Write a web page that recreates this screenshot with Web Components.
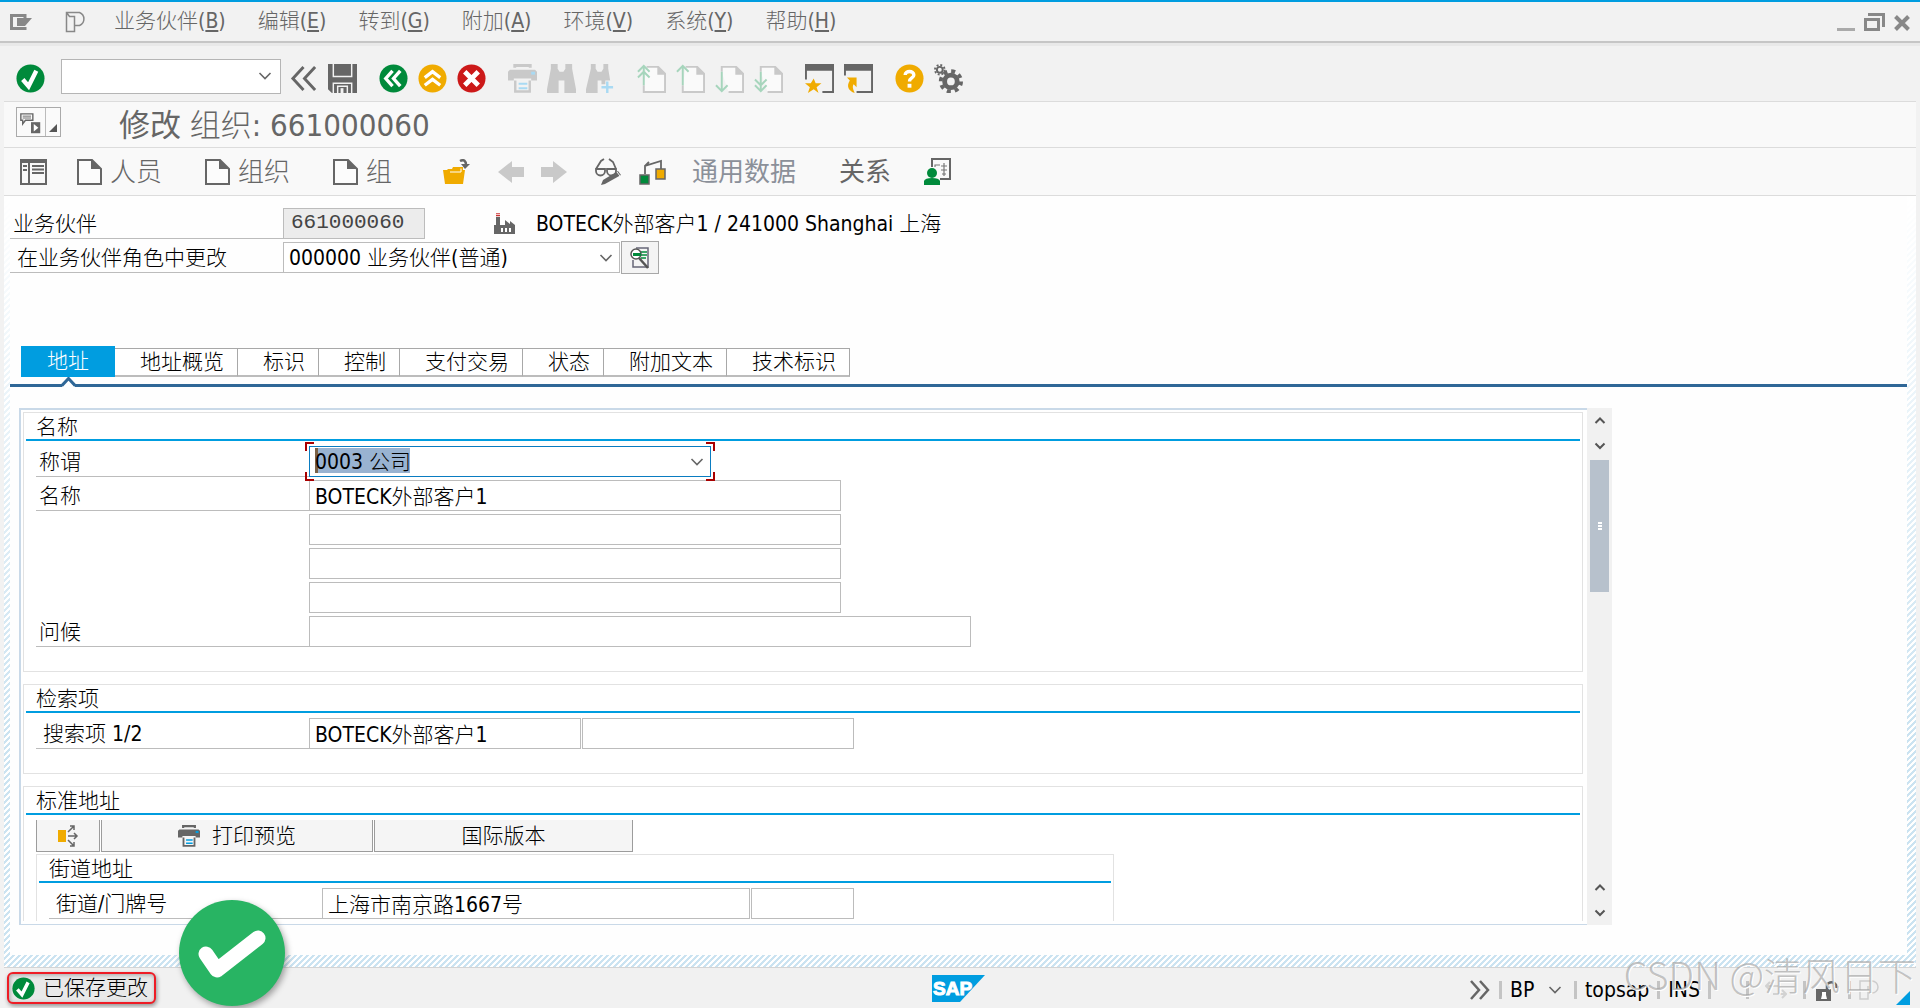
<!DOCTYPE html>
<html lang="zh-CN">
<head>
<meta charset="UTF-8">
<meta name="viewport" content="width=device-width, initial-scale=1.0">
<title>修改 组织: 661000060</title>
<style>
  html, body { margin: 0; height: 100%; }
  body {
    --blue: #009de0;
    --line: #bcbcbc;
    --gray: #666;
    font-family: 'DejaVu Sans Condensed', 'Noto Sans CJK SC', sans-serif;
    font-size: 21px;
    line-height: 30px;
    color: #000;
    background: #f2f2f2;
    overflow: hidden;
  }
</style>
</head>
<body>
<sap-window></sap-window>

<script>
const ICONS = {
  exit: ['0 0 22 16', '<path d="M15 4V1.500H1.500v13H15V13" fill="none" stroke="#888" stroke-width="3"/><path d="M7 4h15l-7 8H7z" fill="#888"/>'],
  pmark: ['0 0 24 22', '<path d="M1.500 20.500v-19h13a7 7 0 0 1 0 13H9.500v6zM9.500 14.500v-9h-5l-3-4" fill="none" stroke="#888" stroke-width="1.500"/>'],
  ok: ['0 0 30 30', '<circle cx="15" cy="15" r="14.500" fill="#008a3b"/><path d="M7 16l6 7L21 7" fill="none" stroke="#fff" stroke-width="4.500"/>'],
  dbl: ['0 0 30 30', '<path d="M15 3L4 15l11 12M27 3L16 15l11 12" fill="none" stroke="#666" stroke-width="3"/>'],
  fwd: ['0 0 22 22', '<path d="M2 2l8 9-8 9M11 2l8 9-8 9" fill="none" stroke="#666" stroke-width="2.500"/>'],
  save: ['0 0 30 30', '<path d="M0 0h30v30H4l-4-4z" fill="#666"/><path d="M5.500 0v13h19V0M5.500 30V20h19v10" fill="none" stroke="#f2f2f2" stroke-width="1.500"/><path d="M10 30v-7h10v7" fill="none" stroke="#f2f2f2" stroke-width="1.500"/><path d="M13 25h3v5h-3z" fill="#f2f2f2"/>'],
  back: ['0 0 30 30', '<circle cx="15" cy="15" r="14.500" fill="#008a3b"/><path d="M14 7l-7 8 7 8M22 7l-7 8 7 8" fill="none" stroke="#fff" stroke-width="3.500"/>'],
  up: ['0 0 30 30', '<circle cx="15" cy="15" r="14.500" fill="#f0ab00"/><path d="M7 14l8-6 8 6M7 22l8-6 8 6" fill="none" stroke="#fff" stroke-width="3.500"/>'],
  cancel: ['0 0 30 30', '<circle cx="15" cy="15" r="14.500" fill="#cc1919"/><path d="M8 8l14 14M22 8L8 22" stroke="#fff" stroke-width="5"/>'],
  print: ['0 0 30 30', '<path d="M7 4V1.500h16V4" fill="none" stroke="currentColor" stroke-width="3"/><path d="M2 6h26l2 2v9H24v-2H6v2H0V8z" fill="currentColor"/><path d="M24 8h4v3h-4z" fill="var(--accent)"/><path d="M7.500 17v11.500h15V17" fill="none" stroke="currentColor" stroke-width="2.500"/><path d="M11 20.500h9M11 25h9" stroke="var(--accent)" stroke-width="2"/>'],
  find: ['0 0 30 30', '<path d="M4 0h7v5l2 3h4l2-3V0h7v5l4 21v4H18V17h-6v13H0v-4L4 5z" fill="#c9c9c9"/>'],
  findnext: ['0 0 30 30', '<path d="M5 0h5v5l2 3h4l2-3V0h5v5l2 12h-5v4h-4v-4h-4v13H0v-4L5 5z" fill="#c9c9c9"/><path d="M22 18v12M16 24h12" stroke="#a9daf3" stroke-width="2.500"/>'],
  first: ['0 0 30 30', '<path d="M10 3h12l7 7v19H7V22" fill="#fafafa" stroke="#c9c9c9" stroke-width="2"/><path d="M21 2v9h9z" fill="#c9c9c9"/><path d="M7 2v20M1 8l6-6 6 6M1 14l6-6 6 6" fill="none" stroke="#a6d5bc" stroke-width="2"/>'],
  prev: ['0 0 30 30', '<path d="M10 3h12l7 7v19H7V22" fill="#fafafa" stroke="#c9c9c9" stroke-width="2"/><path d="M21 2v9h9z" fill="#c9c9c9"/><path d="M7 2v20M1 8l6-6 6 6" fill="none" stroke="#a6d5bc" stroke-width="2"/>'],
  next: ['0 0 30 30', '<path d="M7 8V3h15l7 7v19H14" fill="#fafafa" stroke="#c9c9c9" stroke-width="2"/><path d="M21 2v9h9z" fill="#c9c9c9"/><path d="M7 8v20M1 22l6 6 6-6" fill="none" stroke="#a6d5bc" stroke-width="2"/>'],
  last: ['0 0 30 30', '<path d="M7 8V3h15l7 7v19H14" fill="#fafafa" stroke="#c9c9c9" stroke-width="2"/><path d="M21 2v9h9z" fill="#c9c9c9"/><path d="M7 8v20M1 16l6 6 6-6M1 22l6 6 6-6" fill="none" stroke="#a6d5bc" stroke-width="2"/>'],
  session: ['0 0 30 30', '<path d="M0 0h30v30H18v-2h10V7H2v9H0z" fill="#666"/><path d="M9 15l2 5h6l-5 4 2 6-5-4-6 4 2-6-5-4h6z" fill="#f0ab00"/>'],
  shortcut: ['0 0 30 30', '<path d="M0 0h30v30H13v-2h15V7H2v5H0z" fill="#666"/><path d="M3 14h10v10l-3-3c-2 3 0 6 1 9-6-2-9-7-5-13z" fill="#f0ab00"/>'],
  help: ['0 0 30 30', '<circle cx="15" cy="15" r="14.500" fill="#f0ab00"/><path d="M10.500 11.500c0-5 9-5 9 0 0 3-4.500 3-4.500 6.500" fill="none" stroke="#fff" stroke-width="3.500"/><path d="M13 20.500h4v4h-4z" fill="#fff"/>'],
  gears: ['0 0 30 30', '<g fill="none" stroke="#666"><circle cx="17.500" cy="18" r="6.500" stroke-width="5"/><circle cx="17.500" cy="18" r="10.500" stroke-width="4" stroke-dasharray="4.120 4.120"/><circle cx="6" cy="6" r="3" stroke-width="2"/><circle cx="6" cy="6" r="5" stroke-width="2" stroke-dasharray="1.960 1.960"/></g>'],
  services: ['0 0 30 26', '<path d="M4 2h13v7H9l-3 4V9H4z" fill="none" stroke="#666" stroke-width="1.500"/><path d="M6 4.500h9M6 6.500h9" stroke="#666"/><path d="M15 11h10v12H15z" fill="#666"/><path d="M18 13l5 4-5 4z" fill="#fff"/>'],
  corner: ['0 0 10 10', '<path d="M9 1v8H1z" fill="#555"/>'],
  list: ['0 0 27 26', '<path d="M1 1h25v24H1zM9 1v24" fill="none" stroke="#666" stroke-width="2"/><path d="M0 0h27v4H0z" fill="#666"/><path d="M3 7h4M3 11h4M12 7h12M12 10.500h12M12 14h12" stroke="#666" stroke-width="1.800"/>'],
  page: ['0 0 25 26', '<path d="M1 1h14l9 9v15H1z" fill="#fcfcfc" stroke="#666" stroke-width="2"/><path d="M14 0v10h10z" fill="#666"/>'],
  open: ['0 0 27 26', '<path d="M2 25L0 11h4l1-1h4l1-2h10v3h2l-2 14z" fill="#f0ab00"/><path d="M7 13h11V9.500" fill="none" stroke="#fff"/><path d="M17 2c4-2 6 0 6 4" fill="none" stroke="#666" stroke-width="2.500"/><path d="M18 5h9l-5 5z" fill="#666"/>'],
  left: ['0 0 26 22', '<path d="M0 11L14 0v6h12v10H14v6z" fill="#c9c9c9"/>'],
  right: ['0 0 26 22', '<path d="M26 11L12 0v6H0v10h12v6z" fill="#c9c9c9"/>'],
  glasses: ['0 0 27 28', '<g fill="none" stroke="#666" stroke-width="1.800"><path d="M1 11h9v2a4 4 0 0 1-9 0zM12 11h9v2a4 4 0 0 1-9 0zM1 11l5-8 3-2M21 11l-3-7-4-3"/></g><path d="M6 27l2-5L23 13l3 4-16 9z" fill="#666"/><path d="M22 14l3 4" stroke="#f9f9f9"/>'],
  tree: ['0 0 27 26', '<path d="M6 15V7L22 2v8M6 7l4-4" fill="none" stroke="#666" stroke-width="1.800"/><path d="M1 16h9v9H1z" fill="#008a3b" stroke="#666" stroke-width="1.500"/><path d="M17 10h9v10h-9z" fill="#f0ab00" stroke="#666" stroke-width="1.500"/>'],
  partner: ['0 0 27 27', '<path d="M8 9V1h18v20H16" fill="none" stroke="#666" stroke-width="2"/><path d="M11 9V7h5M20 5v13M17 8h6M17 12h6M18 16h4" fill="none" stroke="#777" stroke-width="1.200"/><circle cx="8" cy="15" r="5" fill="#008a3b"/><path d="M0 27v-4q1-3 8-3t8 3v4z" fill="#008a3b"/>'],
  factory: ['0 0 22 21', '<path d="M0 21V12h2V4h4v8h5V7l5 4V8l5 4v9z" fill="#666"/><path d="M2 0h4M2 2.500h4" stroke="#c33" stroke-width="1.300"/><path d="M7 15h2v4H7zM11 15h2v4h-2zM15 15h2v4h-2z" fill="#fff"/>'],
  detail: ['0 0 22 22', '<path d="M7 1h12v19H4V13" fill="#f4f4f4" stroke="#667" stroke-width="1.500"/><path d="M11 5h7M11 8h7M12 11h5" stroke="#008a3b" stroke-width="1.500"/><circle cx="7" cy="7" r="5" fill="#fff" stroke="#555" stroke-width="1.500"/><path d="M4 6h8v3H4z" fill="#008a3b"/><path d="M10 11l9 10" stroke="#555" stroke-width="2.500"/>'],
  structure: ['0 0 22 22', '<path d="M1 5h8v12H1z" fill="#f0ab00"/><path d="M11 7l6-6M13 1h4v4M11 11h9M17 8l3 3-3 3M11 15l6 6M13 21h4v-4" fill="none" stroke="#666" stroke-width="1.500"/>'],
  chevron: ['0 0 14 14', '<path d="M1.500 4L7 9.500 12.500 4" fill="none" stroke="#666" stroke-width="1.600"/>'],
  sdown: ['0 0 12 12', '<path d="M1.500 3.500L6 8l4.500-4.500" fill="none" stroke="#555" stroke-width="2"/>'],
  sup: ['0 0 12 12', '<path d="M1.500 8L6 3.500 10.500 8" fill="none" stroke="#555" stroke-width="2"/>'],
  min: ['0 0 18 18', '<path d="M0 15h18v3H0z" fill="#aaa"/>'],
  restore: ['0 0 21 18', '<path d="M1.500 6.500h13v10h-13zM4 1.500h15.500V14" fill="none" stroke="#888" stroke-width="3"/>'],
  close: ['0 0 16 18', '<path d="M1.500 3.500l13 13M14.500 3.500l-13 13" stroke="#888" stroke-width="4"/>'],
  lock: ['0 0 22 22', '<path d="M0 10h15v12H0z" fill="#666"/><path d="M11 10V6a5 5 0 0 1 9 0v3" fill="none" stroke="#666" stroke-width="2.500"/><path d="M6 13h4v3l1 4H5l1-4z" fill="#fff"/>'],
  transfer: ['0 0 22 20', '<path d="M1 6h12M5 2L1 6l4 4M8 14h13M17 10l4 4-4 4" fill="none" stroke="#d2d2d2" stroke-width="2"/>'],
  pgray: ['0 0 22 20', '<path d="M1 19V1h12a6 6 0 0 1 0 12H9v6zM9 13V6" fill="none" stroke="#cdcdcd" stroke-width="1.500"/>'],
  grip: ['0 0 14 14', '<path d="M14 0v14H0z" fill="#009de0"/>'],
  done: ['0 0 106 106', '<circle cx="53" cy="53" r="53" fill="#28b463"/><path d="M27 54L38 70 79 38" fill="none" stroke="#fff" stroke-width="15" stroke-linecap="round" stroke-linejoin="round"/>'],
  logo: ['0 0 53 27', '<path d="M0 0h53L28 27H0z" fill="#009de0"/><text x="1" y="20" font-family="Liberation Sans, sans-serif" font-weight="700" font-size="19" fill="#fff" stroke="#fff">SAP</text>']
};

class SapIcon extends HTMLElement {
  connectedCallback() {
    const [box, shapes] = ICONS[this.getAttribute('name')];
    const [, , w, h] = box.split(' ');
    const width = this.getAttribute('width') || w;
    this.attachShadow({ mode: 'open' });
    this.shadowRoot.innerHTML = `
      <style>
        :host { display: inline-flex; flex: none; }
        svg { display: block; width: ${width}px; height: ${Math.round(width * h / w)}px; }
      </style>
      <svg viewBox="${box}" aria-hidden="true">${shapes}</svg>
    `;
  }
}

class SapMenubar extends HTMLElement {
  connectedCallback() {
    const menus = ['业务伙伴 B', '编辑 E', '转到 G', '附加 A', '环境 V', '系统 Y', '帮助 H'];
    this.attachShadow({ mode: 'open' });
    this.shadowRoot.innerHTML = `
      <style>
        :host {
          display: flex;
          align-items: center;
          height: 39px;
          padding: 0 10px;
          border-top: 2px solid var(--blue);
          border-bottom: 2px solid #c6c6c6;
          box-shadow: 0 3px 0 #e9e9e9;
          color: var(--gray);
          font-weight: 300;
        }
        button { font: inherit; color: inherit; background: none; border: 0; padding: 0; display: flex; }
        nav { display: flex; gap: 32px; margin-left: 25px; padding-bottom: 2px; flex: 1; }
        .mark { margin-left: 33px; }
        .controls { display: flex; gap: 9px; }
      </style>
      <button aria-label="菜单"><sap-icon name="exit"></sap-icon></button>
      <sap-icon class="mark" name="pmark"></sap-icon>
      <nav>
        ${menus.map(m => {
          const [text, key] = m.split(' ');
          return `<button><span>${text}(<u>${key}</u>)</span></button>`;
        }).join('')}
      </nav>
      <div class="controls">
        <button aria-label="最小化"><sap-icon name="min"></sap-icon></button>
        <button aria-label="还原"><sap-icon name="restore"></sap-icon></button>
        <button aria-label="关闭"><sap-icon name="close"></sap-icon></button>
      </div>
    `;
  }
}

class SapToolbar extends HTMLElement {
  connectedCallback() {
    const groups = [
      ['dbl', 'save'],
      ['back', 'up', 'cancel'],
      ['print', 'find', 'findnext'],
      ['first', 'prev', 'next', 'last'],
      ['session', 'shortcut'],
      ['help', 'gears']
    ];
    this.attachShadow({ mode: 'open' });
    this.shadowRoot.innerHTML = `
      <style>
        :host { display: flex; align-items: center; height: 46px; padding: 12px 16px 0; color: #c9c9c9; --accent: #a9daf3; }
        button { color: inherit; background: none; border: 0; padding: 0; display: flex; }
        .groups { display: flex; gap: 22px; margin-left: 8px; }
        .group { display: flex; gap: 10px; }
        .command { position: relative; margin-left: 16px; padding-bottom: 3px; }
        input { box-sizing: border-box; display: block; width: 220px; height: 35px; border: 1px solid #b5b5b5; background: #fff; font: inherit; }
        .command sap-icon { position: absolute; right: 9px; top: 10px; color: var(--gray); }
      </style>
      <button aria-label="ok"><sap-icon name="ok" width="29"></sap-icon></button>
      <div class="command"><input type="text" aria-label="命令"><sap-icon name="chevron"></sap-icon></div>
      <div class="groups">
        ${groups.map(g => `<div class="group">${g.map(n =>
          `<button aria-label="${n}"><sap-icon name="${n}" width="29"></sap-icon></button>`).join('')}</div>`).join('')}
      </div>
    `;
  }
}

class SapTitle extends HTMLElement {
  connectedCallback() {
    this.attachShadow({ mode: 'open' });
    this.shadowRoot.innerHTML = `
      <style>
        :host {
          display: flex;
          align-items: center;
          gap: 58px;
          height: 45px;
          margin: 0 4px;
          padding: 0 12px;
          border-top: 1px solid #dcdcdc;
          border-bottom: 1px solid #dcdcdc;
          background: #f9f9f9;
          color: var(--gray);
        }
        button {
          display: flex;
          align-items: flex-end;
          align-self: flex-start;
          width: 45px;
          height: 30px;
          box-sizing: border-box;
          margin: 5px 0 0;
          padding: 0;
          border: 1px solid #aaa;
          background: #fafafa;
        }
        button sap-icon + sap-icon { border-left: 1px solid #bbb; padding: 15px 2px 3px; }
        h1 { margin: 0; font-size: 31px; line-height: 44px; font-weight: 300; }
        b { font-weight: 400; }
      </style>
      <button aria-label="服务"><sap-icon name="services" width="28"></sap-icon><sap-icon name="corner"></sap-icon></button>
      <h1><b>修改</b> <slot></slot></h1>
    `;
  }
}

class SapAppbar extends HTMLElement {
  connectedCallback() {
    this.attachShadow({ mode: 'open' });
    this.shadowRoot.innerHTML = `
      <style>
        :host {
          display: flex;
          align-items: center;
          height: 47px;
          margin: 0 4px;
          padding: 0 16px;
          border-bottom: 1px solid #dcdcdc;
          background: #f9f9f9;
          color: var(--gray);
          font-size: 26px;
          font-weight: 300;
        }
        button { font: inherit; color: inherit; background: none; border: 0; padding: 0; display: flex; align-items: center; gap: 8px; }
        .create { display: flex; gap: 43px; margin: 0 51px 0 30px; }
        .tools { display: flex; align-items: center; gap: 17px; }
        .nav { display: flex; gap: 17px; margin: 0 11px; }
        .links { display: flex; gap: 43px; margin: 0 33px 0 26px; font-weight: 400; }
        [disabled] { color: #8b9099; }
      </style>
      <button aria-label="定位器"><sap-icon name="list"></sap-icon></button>
      <div class="create">
        <button><sap-icon name="page"></sap-icon>人员</button>
        <button><sap-icon name="page"></sap-icon>组织</button>
        <button><sap-icon name="page"></sap-icon>组</button>
      </div>
      <div class="tools">
        <button aria-label="打开"><sap-icon name="open"></sap-icon></button>
        <div class="nav">
          <button aria-label="上一个"><sap-icon name="left"></sap-icon></button>
          <button aria-label="下一个"><sap-icon name="right"></sap-icon></button>
        </div>
        <button aria-label="显示/更改"><sap-icon name="glasses"></sap-icon></button>
        <button aria-label="层次"><sap-icon name="tree"></sap-icon></button>
      </div>
      <div class="links">
        <button disabled>通用数据</button>
        <button>关系</button>
      </div>
      <button aria-label="伙伴"><sap-icon name="partner"></sap-icon></button>
    `;
  }
}

// One form row: label with underline and one or more boxes.
// values and widths are lists split by "|".
class SapField extends HTMLElement {
  connectedCallback() {
    const label = this.getAttribute('label') || '';
    const values = (this.getAttribute('values') || '').split('|');
    const widths = this.getAttribute('widths').split('|');
    const type = this.getAttribute('type') || 'input';
    this.attachShadow({ mode: 'open' });
    this.shadowRoot.innerHTML = `
      <style>
        :host { display: flex; align-items: flex-start; gap: 1px; font-weight: 300; }
        label, .blank {
          box-sizing: border-box;
          flex: none;
          width: 273px;
          height: 31px;
          margin-right: -1px;
          padding-left: var(--indent, 3px);
          line-height: 32px;
        }
        label { border-bottom: 1px solid var(--line); }
        input, select {
          display: block;
          box-sizing: border-box;
          height: 31px;
          margin: 0;
          padding: 0 5px;
          border: 1px solid var(--line);
          border-radius: 0;
          background: #fff;
          font: inherit;
          color: inherit;
          appearance: none;
          outline: 0;
        }
        input { padding-bottom: 2px; }
        input[readonly] { padding-left: 7px; background: #ececec; font-family: 'Liberation Mono', monospace; color: #444; }
        .combo { position: relative; }
        .combo sap-icon { position: absolute; right: 7px; top: 9px; pointer-events: none; }
        :host([active]) select {
          border-color: #0a7cc1;
          background:
            linear-gradient(#7a6248, #7a6248) 5px 1px / 3px 25px no-repeat,
            linear-gradient(#99b3d1, #99b3d1) 5px 1px / 95px 25px no-repeat, #fff;
        }
        .corners { display: none; }
        :host([active]) .corners {
          --c: linear-gradient(#a80000, #a80000) no-repeat;
          display: block;
          position: absolute;
          inset: -4px;
          pointer-events: none;
          background:
            var(--c), var(--c), var(--c), var(--c), var(--c), var(--c), var(--c), var(--c);
          background-size: 9px 2px, 2px 9px, 9px 2px, 2px 9px, 9px 2px, 2px 9px, 9px 2px, 2px 9px;
          background-position: 0 0, 0 0, 100% 0, 100% 0, 0 100%, 0 100%, 100% 100%, 100% 100%;
          background-repeat: no-repeat;
        }
      </style>
      ${label ? `<label for="f0">${label}</label>` : '<span class="blank"></span>'}
      ${values.map((v, i) => type === 'select'
        ? `<div class="combo"><select id="f${i}" style="width:${widths[i]}px"><option>${v}</option></select>
           <sap-icon name="chevron"></sap-icon><span class="corners"></span></div>`
        : `<input type="text" id="f${i}" value="${v}" style="width:${widths[i]}px"
           ${this.hasAttribute('readonly') ? 'readonly' : ''} ${label && i === 0 ? '' : 'aria-label="续"'}>`).join('')}
      <slot></slot>
    `;
  }
}

class SapGroup extends HTMLElement {
  connectedCallback() {
    this.attachShadow({ mode: 'open' });
    this.shadowRoot.innerHTML = `
      <style>
        :host { display: block; border: 1px solid #e2e2e2; padding-bottom: 24px; background: #fff; }
        h2 {
          margin: 0 2px;
          padding-left: 10px;
          height: 26px;
          line-height: 28px;
          font-size: 21px;
          font-weight: 300;
          border-bottom: 2px solid var(--blue);
        }
        .rows { display: flex; flex-direction: column; gap: 3px; padding: 5px 0 0 12px; }
      </style>
      <h2>${this.getAttribute('heading')}</h2>
      <div class="rows"><slot></slot></div>
    `;
  }
}

class SapTabs extends HTMLElement {
  connectedCallback() {
    const tabs = ['地址', '地址概览', '标识', '控制', '支付交易', '状态', '附加文本', '技术标识'];
    this.attachShadow({ mode: 'open' });
    this.shadowRoot.innerHTML = `
      <style>
        :host { display: block; border-bottom: 3px solid #2f6797; padding: 0 11px 7px; position: relative; }
        .list { display: flex; align-items: flex-end; }
        button {
          box-sizing: border-box;
          height: 29px;
          padding: 0 13px 0 25px;
          border: solid #a8a8a8;
          border-width: 1px 1px 2px 0;
          border-bottom-color: var(--line);
          background: #fff;
          font: inherit;
          font-weight: 300;
          line-height: 26px;
          color: #000;
        }
        button[aria-selected=true] { height: 31px; padding: 0 26px; border: 0; background: var(--blue); color: #fff; line-height: 31px; }
        svg { position: absolute; left: 51px; bottom: -3px; width: 15px; height: 10px; }
      </style>
      <div class="list" role="tablist">
        ${tabs.map((t, i) => `<button role="tab" aria-selected="${i === 0}">${t}</button>`).join('')}
      </div>
      <svg viewBox="0 0 15 10"><path d="M1 10L7.500 2 14 10z" fill="#fff"/><path d="M1 8.500L7.500 1.500 14 8.500" fill="none" stroke="#2f6797" stroke-width="3"/></svg>
    `;
  }
}

class SapScrollbar extends HTMLElement {
  connectedCallback() {
    this.attachShadow({ mode: 'open' });
    this.shadowRoot.innerHTML = `
      <style>
        :host { display: flex; flex-direction: column; flex: none; width: 25px; background: #f1f1f1; }
        button { display: flex; justify-content: center; align-items: center; height: 25px; border: 0; padding: 0; background: none; }
        .track { flex: 1; }
        .thumb {
          display: flex;
          flex-direction: column;
          align-items: center;
          justify-content: center;
          gap: 1px;
          height: 132px;
          margin: 2px 3px 0;
          background: #b7c1cc;
        }
        i { width: 4px; height: 2px; background: #fff; }
      </style>
      <button aria-label="向上"><sap-icon name="sup"></sap-icon></button>
      <button aria-label="向下"><sap-icon name="sdown"></sap-icon></button>
      <div class="track"><div class="thumb"><i></i><i></i><i></i></div></div>
      <button aria-label="向上"><sap-icon name="sup"></sap-icon></button>
      <button aria-label="向下"><sap-icon name="sdown"></sap-icon></button>
    `;
  }
}

class SapAddress extends HTMLElement {
  connectedCallback() {
    this.attachShadow({ mode: 'open' });
    this.shadowRoot.innerHTML = `
      <style>
        :host { display: flex; align-items: stretch; flex: 1; min-height: 0; margin-left: 9px; }
        .panel {
          box-sizing: border-box;
          flex: 0 1 1568px;
          min-width: 0;
          border: solid #c9d9e8;
          border-width: 2px 0 1px 2px;
          padding: 2px 4px 3px 2px;
          background: #fff;
        }
        .clip { height: 100%; overflow: hidden; display: flex; flex-direction: column; gap: 12px; }
        .clip > * { flex: none; }
        .search { --indent: 7px; }
        .street { --indent: 7px; width: 1076px; margin-top: -1px; }
        .buttons { display: flex; gap: 1px; }
        button {
          display: flex;
          align-items: center;
          justify-content: center;
          gap: 12px;
          box-sizing: border-box;
          height: 32px;
          padding: 0;
          border: solid #9c9c9c;
          border-width: 0 1px 1px 1px;
          background: #f5f5f5;
          color: #666;
          --accent: #009de0;
          font: inherit;
          font-weight: 300;
        }
        button span { color: #000; }
      </style>
      <div class="panel"><div class="clip">
        <sap-group heading="名称">
          <sap-field type="select" active label="称谓" values="0003 公司" widths="402"></sap-field>
          <sap-field label="名称" values="BOTECK外部客户1" widths="532"></sap-field>
          <sap-field widths="532"></sap-field>
          <sap-field widths="532"></sap-field>
          <sap-field widths="532"></sap-field>
          <sap-field label="问候" widths="662"></sap-field>
        </sap-group>
        <sap-group heading="检索项" class="search">
          <sap-field label="搜索项 1/2" values="BOTECK外部客户1|" widths="272|272"></sap-field>
        </sap-group>
        <sap-group heading="标准地址">
          <div class="buttons">
            <button style="width:64px" aria-label="结构"><sap-icon name="structure"></sap-icon></button>
            <button style="width:272px"><sap-icon name="print" width="22"></sap-icon><span>打印预览</span></button>
            <button style="width:259px"><span>国际版本</span></button>
          </div>
          <sap-group heading="街道地址" class="street">
            <sap-field label="街道/门牌号" values="上海市南京路1667号|" widths="428|103"></sap-field>
          </sap-group>
        </sap-group>
      </div></div>
      <sap-scrollbar></sap-scrollbar>
    `;
  }
}

class SapStatusbar extends HTMLElement {
  connectedCallback() {
    this.attachShadow({ mode: 'open' });
    this.shadowRoot.innerHTML = `
      <style>
        :host {
          display: grid;
          grid-template-columns: 1fr auto 1fr;
          align-items: center;
          height: 40px;
          padding: 0 10px 0 7px;
          background: #f1f1f1;
        }
        .message {
          justify-self: start;
          display: flex;
          align-items: center;
          gap: 8px;
          box-sizing: border-box;
          height: 32px;
          padding: 0 6px 0 3px;
          border: 2px solid #ee1c25;
          border-radius: 6px;
          background: #e9e9e9;
          box-shadow: 1px 2px 4px rgba(0,0,0,0.4), inset 1px 1px 4px rgba(0,0,0,0.3);
          font-weight: 300;
        }
        .info { justify-self: end; display: flex; align-items: center; gap: 8px; padding-top: 3px; }
        .info i { width: 3px; height: 18px; background: #c4c4c4; }
        select { appearance: none; border: 0; padding: 0; width: 28px; background: none; font: inherit; color: inherit; }
        .system { display: flex; align-items: center; gap: 10px; padding-right: 4px; }
        .lock { margin: 0 2px; }
        .grip { align-self: flex-end; margin-left: 7px; }
        .empty { width: 19px; }
        .off { width: 38px; display: flex; justify-content: center; }
      </style>
      <div class="message" role="status"><sap-icon name="ok" width="23"></sap-icon>已保存更改</div>
      <sap-icon name="logo"></sap-icon>
      <div class="info">
        <sap-icon name="fwd" width="22"></sap-icon><i></i>
        <div class="system"><select aria-label="系统"><option>BP</option></select><sap-icon name="chevron"></sap-icon></div>
        <i></i><span>topsap</span><i></i><span>INS</span><i></i><span class="empty"></span><i></i>
        <span class="off"><sap-icon name="transfer"></sap-icon></span><i></i>
        <sap-icon class="lock" name="lock"></sap-icon><i></i>
        <sap-icon name="pgray"></sap-icon>
        <sap-icon class="grip" name="grip"></sap-icon>
      </div>
    `;
  }
}

class SapWindow extends HTMLElement {
  connectedCallback() {
    this.attachShadow({ mode: 'open' });
    this.shadowRoot.innerHTML = `
      <style>
        :host { display: flex; flex-direction: column; height: 100vh; position: relative; overflow: hidden; }
        main {
          flex: 1;
          min-height: 0;
          display: flex;
          margin: 0 4px;
          padding: 0 9px 12px 6px;
          border-bottom: 1px solid #d4d4d4;
          background:
            linear-gradient(#fff, rgba(255,255,255,0) 70%),
            linear-gradient(135deg, #cbe3f1 25%, #fff 25%, #fff 50%, #cbe3f1 50%, #cbe3f1 75%, #fff 75%) 0 0 / 6px 6px;
        }
        .content { flex: 1; min-width: 0; display: flex; flex-direction: column; padding: 12px 0 30px; background: #fefefe; }
        .head { display: flex; flex-direction: column; gap: 3px; margin-bottom: 72px; }
        .partner { --indent: 3px; }
        .role { --indent: 7px; }
        .name { display: flex; align-items: center; gap: 20px; height: 31px; margin-left: 68px; }
        .detail { display: flex; align-items: center; justify-content: center; width: 38px; height: 33px; margin-top: -1px; padding: 0; border: 1px solid #a8a8a8; background: #f4f4f4; }
        sap-tabs { margin-bottom: 21px; }
        .done { position: absolute; left: 179px; bottom: 2px; filter: drop-shadow(2px 3px 3px rgba(0,0,0,0.35)); }
        .watermark {
          position: absolute;
          right: 4px;
          bottom: 9px;
          font: 300 38px/50px 'Noto Sans CJK SC', sans-serif;
          color: rgba(160,160,160,0.65);
          text-shadow: 1px 1px 0 #fff;
          white-space: nowrap;
          pointer-events: none;
        }
      </style>
      <sap-menubar></sap-menubar>
      <sap-toolbar></sap-toolbar>
      <sap-title>组织: 661000060</sap-title>
      <sap-appbar></sap-appbar>
      <main>
        <div class="content">
          <div class="head">
            <sap-field class="partner" readonly label="业务伙伴" values="661000060" widths="142">
              <div class="name"><sap-icon name="factory"></sap-icon><span>BOTECK外部客户1 / 241000 Shanghai 上海</span></div>
            </sap-field>
            <sap-field class="role" type="select" label="在业务伙伴角色中更改" values="000000 业务伙伴(普通)" widths="337">
              <button class="detail" aria-label="详细"><sap-icon name="detail"></sap-icon></button>
            </sap-field>
          </div>
          <sap-tabs></sap-tabs>
          <sap-address></sap-address>
        </div>
      </main>
      <sap-statusbar></sap-statusbar>
      <sap-icon class="done" name="done"></sap-icon>
      <div class="watermark">CSDN @清风日下</div>
    `;
  }
}

customElements.define('sap-icon', SapIcon);
customElements.define('sap-menubar', SapMenubar);
customElements.define('sap-toolbar', SapToolbar);
customElements.define('sap-title', SapTitle);
customElements.define('sap-appbar', SapAppbar);
customElements.define('sap-field', SapField);
customElements.define('sap-group', SapGroup);
customElements.define('sap-tabs', SapTabs);
customElements.define('sap-scrollbar', SapScrollbar);
customElements.define('sap-address', SapAddress);
customElements.define('sap-statusbar', SapStatusbar);
customElements.define('sap-window', SapWindow);
</script>
</body>
</html>
